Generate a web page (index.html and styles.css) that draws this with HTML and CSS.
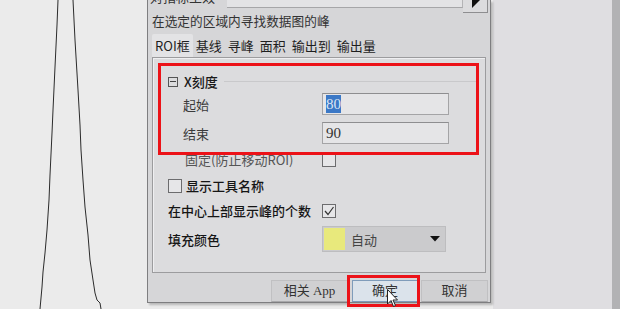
FILE: index.html
```html
<!DOCTYPE html>
<html lang="zh-CN">
<head>
<meta charset="utf-8">
<title>ROI</title>
<link rel="stylesheet" href="styles.css">
</head>
<body>
<div class="screen">
  <div class="plot">
    <svg width="147" height="309" viewBox="0 0 147 309">
      <polyline class="trace" points="58,0 57,25 55,67 53,110 52,133 50,175 49,200 47,230 45,253 43,272 42,287 41,298 40,309"/>
      <polyline class="trace" points="73,0 75,40 78,90 80,125 81,150 83,180 85,207 88,235 90,260 93,280 95,293 97,300 100,303 101,309"/>
    </svg>
  </div>

  <div class="dialog">
    <div class="toprow">
      <span class="toplabel">对指标生效</span>
      <div class="topfield"></div>
      <div class="topbtn">
        <svg width="10" height="10" viewBox="0 0 10 10"><polygon points="1,-8 1,8 9,0" fill="#111"/></svg>
      </div>
    </div>

    <div class="desc">在选定的区域内寻找数据图的峰</div>

    <div class="tabs">
      <span class="tab active">ROI框</span>
      <span class="tab">基线</span>
      <span class="tab">寻峰</span>
      <span class="tab">面积</span>
      <span class="tab">输出到</span>
      <span class="tab">输出量</span>
    </div>

    <div class="panel">
      <div class="group-head">
        <span class="collapse"></span>
        <span class="group-title">X刻度</span>
        <span class="rule"></span>
      </div>
      <div class="row row-start">
        <span class="label sub">起始</span>
        <div class="input"><span class="sel">80</span></div>
      </div>
      <div class="row row-end">
        <span class="label sub">结束</span>
        <div class="input">90</div>
      </div>
      <div class="row row-fixed">
        <span class="label sub dim">固定(防止移动ROI)</span>
        <span class="cb"></span>
      </div>
      <div class="row row-tool">
        <span class="cb"></span>
        <span class="label strong cb-label">显示工具名称</span>
      </div>
      <div class="row row-peaks">
        <span class="label strong">在中心上部显示峰的个数</span>
        <span class="cb">
          <svg width="12" height="12" viewBox="0 0 12 12"><polyline points="2,6 5,9.5 10.5,2" fill="none" stroke="#333" stroke-width="1.2"/></svg>
        </span>
      </div>
      <div class="row row-fill">
        <span class="label strong">填充颜色</span>
        <div class="colorsel">
          <span class="swatch"></span>
          <span class="colorname">自动</span>
          <svg class="dd" width="10" height="6" viewBox="0 0 10 6"><polygon points="0,0 10,0 5,5.5" fill="#111"/></svg>
        </div>
      </div>
    </div>

    <div class="buttons">
      <span class="btn btn-app">相关 App</span>
      <span class="btn btn-ok">确定</span>
      <span class="btn btn-cancel">取消</span>
    </div>

    <div class="mark mark-roi"></div>
    <div class="mark mark-ok"></div>
    <svg class="cursor" width="12" height="20" viewBox="0 0 12 20">
      <polygon points="0.5,0.5 0.5,15 4,11.5 6.5,17.5 8.5,16.5 6,11 10.5,11" fill="#fff" stroke="#222" stroke-width="1"/>
    </svg>
  </div>

  <div class="rightbg"></div>
</div>
</body>
</html>
```

FILE: styles.css
```css
* { box-sizing: border-box; }

html, body {
  margin: 0;
  padding: 0;
  width: 620px;
  height: 309px;
  overflow: hidden;
  background: #ebebeb;
  font-family: "Noto Sans CJK SC", "Noto Sans", sans-serif;
  color: #2a2a2a;
}

.screen {
  display: flex;
  align-items: flex-start;
  width: 620px;
  height: 309px;
}

.plot {
  flex: none;
  width: 147px;
  height: 309px;
}
.plot svg { display: block; }
.trace {
  fill: none;
  stroke: #2b2b2b;
  stroke-width: 1;
}

/* ---------- dialog ---------- */
.dialog {
  position: relative;
  flex: none;
  width: 344px;
  height: 303px;
  background: #d6d6d8;
  border-left: 1px solid #7e7e80;
  border-right: 1px solid #7e7e80;
  border-bottom: 1px solid #7e7e80;
  box-shadow: 2px 2px 2px rgba(0, 0, 0, 0.22);
  padding: 0 2px 0 4px;
  display: flex;
  flex-direction: column;
}

.toprow {
  display: flex;
  align-items: flex-start;
  height: 13px;
}
.toplabel {
  width: 77px;
  margin-left: -2px;
  margin-top: -11px;
  font-size: 13px;
  line-height: 15px;
  color: #333;
  white-space: nowrap;
  overflow: hidden;
}
.topfield {
  width: 237px;
  height: 8px;
  background: #e3e3e5;
  border-right: 1px solid #b4b4b6;
  border-bottom: 1px solid #a6a6a8;
}
.topbtn {
  width: 25px;
  height: 13px;
  background: #dcdcde;
  border-right: 1px solid #8e8e90;
  border-bottom: 1px solid #8e8e90;
  padding-left: 8px;
}
.topbtn svg { display: block; }

.desc {
  height: 15px;
  margin-top: 0;
  font-size: 12.7px;
  line-height: 15px;
  color: #333;
  white-space: nowrap;
}

.tabs {
  display: flex;
  height: 23px;
  margin-top: 6px;
  align-items: stretch;
}
.tab {
  padding: 0 3px;
  font-size: 13px;
  line-height: 23px;
  color: #1e1e1e;
  white-space: nowrap;
}
.tab.active {
  background: #e3e3e5;
  border-radius: 2px 2px 0 0;
}

/* ---------- panel ---------- */
.panel {
  width: 334px;
  height: 216px;
  background: #dcdcde;
  border: 1px solid #9c9c9e;
  box-shadow: inset 1px 1px 0 #efeff1;
  padding: 16px 0 0 15px;
  display: flex;
  flex-direction: column;
}

.group-head {
  display: flex;
  align-items: center;
  height: 15px;
}
.collapse {
  position: relative;
  width: 10px;
  height: 10px;
  border: 1px solid #555;
  margin-right: 6px;
}
.collapse::after {
  content: "";
  position: absolute;
  left: 1px;
  right: 1px;
  top: 3px;
  border-top: 1px solid #444;
}
.group-title {
  font-size: 13px;
  font-weight: 500;
  color: #1a1a1a;
}
.rule {
  flex: 1;
  margin: 0 8px 0 6px;
  border-top: 1px solid #c9c9cb;
}

.row {
  display: grid;
  grid-template-columns: 154px auto;
  align-items: center;
}
.row-start { margin-top: 4px; height: 22px; }
.row-end   { margin-top: 7px; height: 22px; }
.row-fixed { margin-top: 8px; height: 15px; }
.row-tool  { margin-top: 11px; height: 15px; grid-template-columns: 18px auto; }
.row-peaks { margin-top: 10px; height: 15px; }
.row-fill  { margin-top: 8px; height: 26px; }

.label {
  font-size: 13px;
  line-height: 15px;
  white-space: nowrap;
  color: #3a3a3a;
}
.label.sub { padding-left: 15px; }
.label.dim { padding-left: 17px; color: #555; }
.label.strong { font-weight: 500; color: #151515; }

.input {
  width: 127px;
  height: 22px;
  background: #e5e5e7;
  border: 1px solid #a4a4a6;
  border-top-color: #8e8e90;
  padding: 1px 0 0 3px;
  font-family: "Liberation Serif", serif;
  font-size: 15px;
  line-height: 18px;
  color: #333;
}
.sel {
  display: inline-block;
  background: #3b78c6;
  color: #dbe6f4;
  line-height: 18px;
}

.cb {
  width: 14px;
  height: 14px;
  background: #e6e6e8;
  border: 1px solid #6c6c6e;
  display: flex;
  align-items: center;
  justify-content: center;
}
.cb svg { display: block; }

.colorsel {
  width: 124px;
  height: 26px;
  background: #cbcbcd;
  border: 1px solid #bdbdbf;
  display: flex;
  align-items: center;
  padding: 0 0 0 1px;
}
.swatch {
  width: 21px;
  height: 22px;
  background: #e8e97c;
}
.colorname {
  margin-left: 6px;
  font-size: 13px;
  color: #444;
}
.dd {
  margin-left: auto;
  margin-right: 5px;
}

/* ---------- buttons ---------- */
.buttons {
  display: flex;
  justify-content: flex-end;
  margin-top: 7px;
  height: 22px;
}
.btn {
  height: 22px;
  background: #d0d0d2;
  border: 1px solid #c0c0c2;
  border-bottom-color: #a8a8aa;
  font-family: "Liberation Serif", "Noto Sans CJK SC", serif;
  font-size: 13px;
  line-height: 20px;
  color: #333;
  text-align: center;
}
.btn-app { width: 77px; }
.btn-ok {
  width: 66px;
  margin-left: 4px;
  background: #dbe3eb;
  border: 1px solid #7f9cba;
}
.btn-cancel { width: 67px; margin-left: 3px; }

/* ---------- annotations (overlays) ---------- */
.mark {
  position: absolute;
  border: 3px solid #ec1218;
  pointer-events: none;
}
.mark-roi {
  left: 10px;
  top: 63px;
  width: 321px;
  height: 92px;
}
.mark-ok {
  left: 199px;
  top: 275px;
  width: 73px;
  height: 32px;
}
.cursor {
  position: absolute;
  left: 239px;
  top: 289px;
}

.rightbg {
  flex: 1;
  height: 309px;
  margin-left: 2px;
  background: #dfdee1;
  border-right: 8px solid #b2b2b4;
}
```
